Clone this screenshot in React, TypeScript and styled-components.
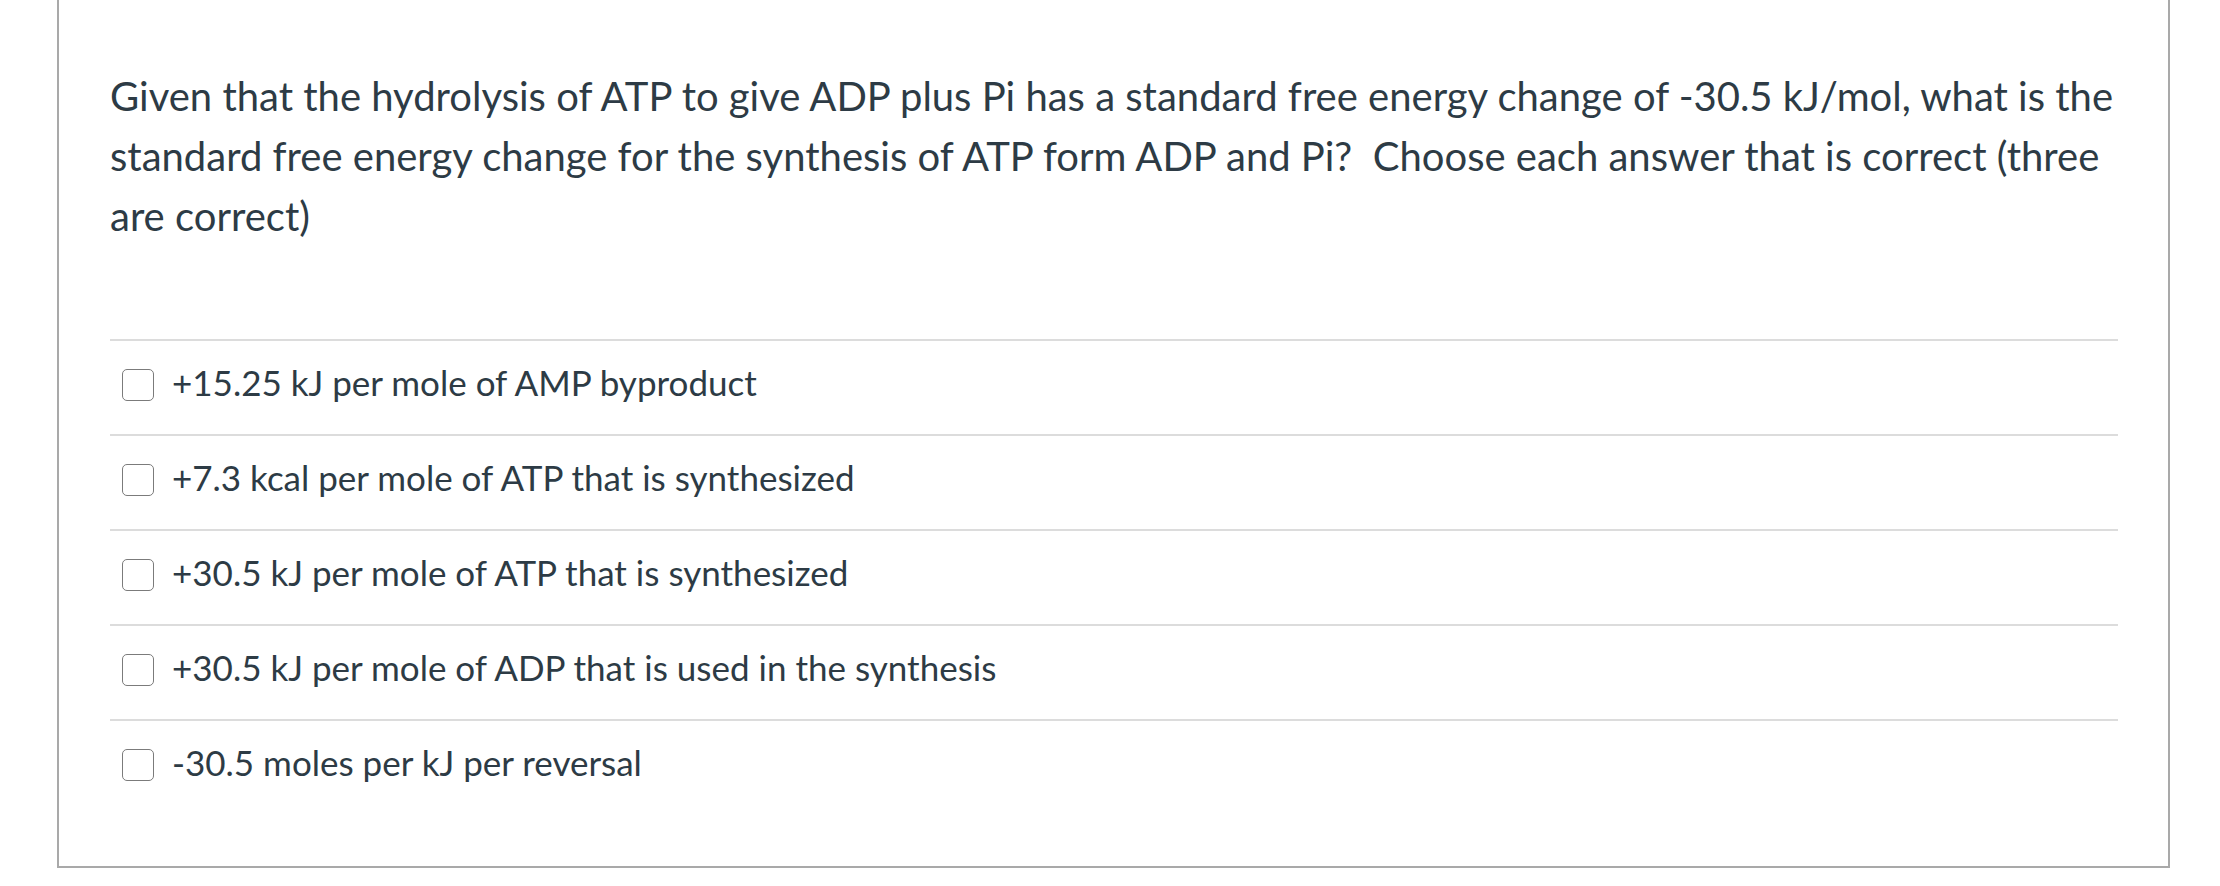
import React, { useState } from 'react';
import styled, { createGlobalStyle } from 'styled-components';

const GlobalStyle = createGlobalStyle`
  html, body {
    margin: 0;
    padding: 0;
    background: #ffffff;
  }
  body {
    font-family: Lato, "Open Sans", "Liberation Sans", sans-serif;
    color: #2d3b45;
  }
`;

const Page = styled.div`
  padding: 0 50px 20px 57px;
`;

const QuestionCard = styled.div`
  border: 2px solid #a9a9a9;
  border-top: none;
  padding: 66px 50px 52px 51px;
`;

const QuestionText = styled.p`
  margin: 0 0 93px;
  font-size: 40px;
  line-height: 60px;
  color: #2d3b45;
`;

const AnswerList = styled.div`
  display: flex;
  flex-direction: column;
`;

const AnswerRow = styled.label`
  display: flex;
  align-items: center;
  box-sizing: border-box;
  height: 95px;
  border-top: 2px solid #dcdcdc;
  padding: 0 0 12px 12px;
  cursor: pointer;
`;

const Box = styled.span<{ $checked: boolean }>`
  flex: none;
  box-sizing: border-box;
  width: 32px;
  height: 32px;
  border: 1.5px solid #7b7b7b;
  border-radius: 5px;
  background: ${(p) => (p.$checked ? '#2d3b45' : '#ffffff')};
  margin: 6px 18px 0 0;
`;

const AnswerText = styled.span`
  font-size: 35px;
  line-height: 52px;
  color: #2d3b45;
`;

const answers = [
  '+15.25 kJ per mole of AMP byproduct',
  '+7.3 kcal per mole of ATP that is synthesized',
  '+30.5 kJ per mole of ATP that is synthesized',
  '+30.5 kJ per mole of ADP that is used in the synthesis',
  '-30.5 moles per kJ per reversal',
];

function App() {
  const [checked, setChecked] = useState<boolean[]>(answers.map(() => false));

  const toggle = (i: number) => {
    setChecked((prev) => prev.map((v, j) => (j === i ? !v : v)));
  };

  return (
    <>
      <GlobalStyle />
      <Page>
        <QuestionCard>
          <QuestionText>
            Given that the hydrolysis of ATP to give ADP plus Pi has a standard free energy change of -30.5 kJ/mol,
            what is the standard free energy change for the synthesis of ATP form ADP and Pi?{'\u00a0 '}Choose each
            answer that is correct (three are correct)
          </QuestionText>
          <AnswerList>
            {answers.map((a, i) => (
              <AnswerRow key={a} onClick={() => toggle(i)}>
                <Box $checked={checked[i]} />
                <AnswerText>{a}</AnswerText>
              </AnswerRow>
            ))}
          </AnswerList>
        </QuestionCard>
      </Page>
    </>
  );
}

export default App;
